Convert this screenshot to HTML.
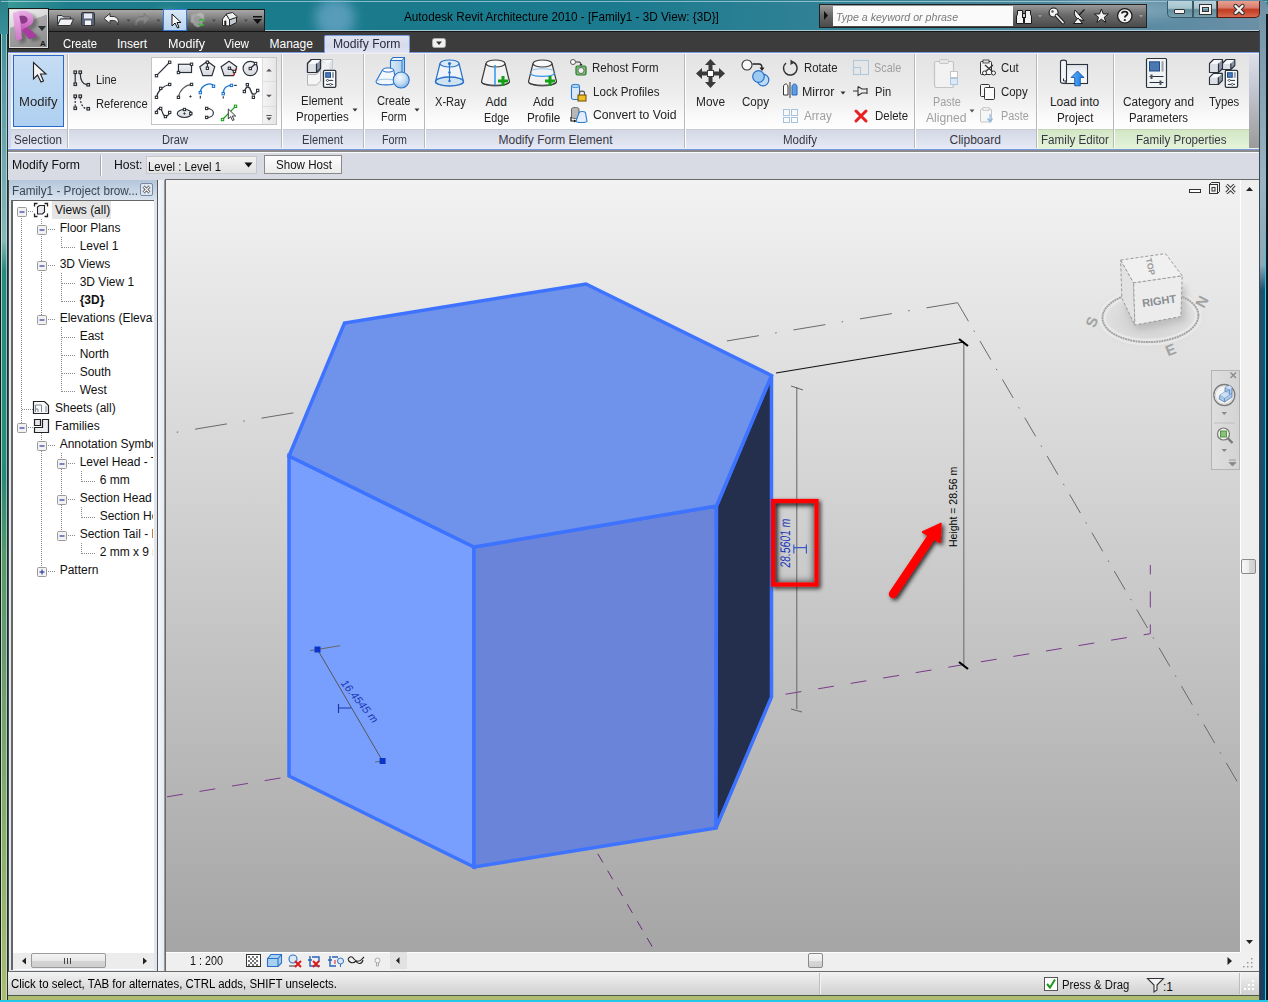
<!DOCTYPE html>
<html><head><meta charset="utf-8">
<style>
*{margin:0;padding:0;box-sizing:border-box}
html,body{width:1268px;height:1002px;overflow:hidden}
body{position:relative;font-family:"Liberation Sans",sans-serif;font-size:12px;color:#1e1e1e;background:#2a8a8a}
.a{position:absolute}
.t{position:absolute;white-space:nowrap;line-height:1}
svg{position:absolute;overflow:visible}
</style></head><body>
<div class="a" style="left:0px;top:0px;width:1268px;height:1002px;background:linear-gradient(180deg,#2a8088 0,#3a9098 34px,#5a9aa8 80px,#7aaab4 180px,#8ab8b8 240px,#2a8a80 270px,#2a8a7a 480px,#5a9a6a 560px,#6a9a72 650px,#8aae6a 820px,#b0bb70 1002px);"></div>
<div class="a" style="left:0px;top:0px;width:1px;height:1002px;background:#0a1a14;"></div>
<div class="a" style="left:1px;top:0px;width:1px;height:1002px;background:rgba(220,240,230,.7);"></div>
<div class="a" style="left:6px;top:30px;width:1px;height:972px;background:rgba(210,235,225,.6);"></div>
<div class="a" style="left:7px;top:30px;width:1px;height:972px;background:#1a3030;"></div>
<div class="a" style="left:8px;top:0px;width:1251px;height:32px;background:linear-gradient(90deg,#3a9a98 0,#1e7e8c 60px,#1a7b8c 260px,#1b7a8e 600px,#3a8498 900px,#5a8aa2 1150px,#6b90a6 1251px);"></div>
<div class="a" style="left:0px;top:0px;width:8px;height:34px;background:linear-gradient(180deg,#2a8088,#3a9098);"></div>
<div class="a" style="left:1px;top:1px;width:1266px;height:1px;background:#cfe6e6;opacity:.6"></div>
<svg style="left:0;top:0" width="1268" height="34"><defs><filter id="tb"><feGaussianBlur stdDeviation="6"/></filter></defs><g filter="url(#tb)" opacity=".55"><circle cx="335" cy="18" r="20" fill="#8ab8e0"/><circle cx="168" cy="22" r="12" fill="#6ac890"/><ellipse cx="1120" cy="10" rx="60" ry="10" fill="#9ab8c8"/></g></svg>
<div class="a" style="left:1259px;top:0px;width:9px;height:1002px;background:linear-gradient(180deg,#6a90a6 0,#7898aa 30px,#9ab4c2 180px,#8aa8b8 265px,#1e5070 290px,#1a4a6a 630px,#1a3f5e 1002px);border-radius:0 8px 0 0"></div>
<div class="a" style="left:8px;top:30px;width:1251px;height:1px;background:rgba(210,228,236,.75);"></div>
<div class="a" style="left:1259px;top:30px;width:1px;height:972px;background:#3a4a55;"></div>
<div class="a" style="left:1265px;top:230px;width:1px;height:772px;background:linear-gradient(180deg,rgba(42,208,240,0),#2ad0f0 60px);"></div>
<div class="a" style="left:1266px;top:14px;width:2px;height:988px;background:#0a1a20;"></div>
<div class="a" style="left:0px;top:1000px;width:1268px;height:2px;background:#22c8e8;"></div>
<div class="t" style="left:404.0px;top:10.7px;font-size:12px;color:#000;transform:scaleX(0.978);transform-origin:0 0;">Autodesk Revit Architecture 2010 - [Family1 - 3D View: {3D}]</div>
<div class="a" style="left:1167px;top:1px;width:26px;height:17px;border:1px solid #3a5a66;border-top:0;border-radius:0 0 0 5px;background:linear-gradient(180deg,#b9d3dc 0,#a6c3cd 45%,#5f8c9c 55%,#7aa2b0)"></div>
<div class="a" style="left:1174px;top:9px;width:11px;height:5px;background:#f4f4f4;border:1px solid #333;border-radius:1px"></div>
<div class="a" style="left:1193px;top:1px;width:24px;height:17px;border:1px solid #3a5a66;border-top:0;background:linear-gradient(180deg,#b9d3dc 0,#a6c3cd 45%,#5f8c9c 55%,#7aa2b0)"></div>
<div class="a" style="left:1200px;top:5px;width:11px;height:9px;border:2.5px solid #f4f4f4;box-shadow:0 0 0 1px #333, inset 0 0 0 1px #333"></div>
<div class="a" style="left:1217px;top:1px;width:43px;height:17px;border:1px solid #5a1a10;border-top:0;border-radius:0 0 5px 0;background:linear-gradient(180deg,#e8a090 0,#d88070 40%,#c03a20 55%,#d86a50)"></div>
<svg style="left:1233px;top:4px" width="12" height="11" viewBox="0 0 12 11"><path d="M2.5,2 L9.5,9 M9.5,2 L2.5,9" stroke="#333" stroke-width="4.4" stroke-linecap="round"/><path d="M2.5,2 L9.5,9 M9.5,2 L2.5,9" stroke="#f4f4f4" stroke-width="2.4" stroke-linecap="round"/></svg>
<div class="a" style="left:819px;top:4px;width:328px;height:24px;background:linear-gradient(180deg,#9a9a9a,#6a6a6a 45%,#4a4a4a);border:1px solid #222"></div>
<div class="a" style="left:833px;top:6px;width:180px;height:20px;background:#fafafa;"></div>
<svg style="left:823px;top:11px" width="6" height="10"><path d="M1,0 L5,4.5 L1,9 Z" fill="#111"/></svg>
<div class="t" style="left:836.0px;top:11.6px;font-size:11.5px;color:#7a7a7a;font-style:italic;transform:scaleX(0.924);transform-origin:0 0;">Type a keyword or phrase</div>
<svg style="left:0;top:0" width="1268" height="34" viewBox="0 0 1268 34">
<g fill="#f2f2f2" stroke="#1a1a1a" stroke-width="1">
<path d="M1017.5,10.5 H1022.5 V14.5 L1023.5,16 V23.5 H1016.5 V16 L1017.5,14.5 Z"/>
<path d="M1025.5,10.5 H1030.5 V14.5 L1031.5,16 V23.5 H1024.5 V16 L1025.5,14.5 Z"/>
<rect x="1022.5" y="13.5" width="3" height="4" fill="#ccc"/>
</g>
<path d="M1038,15 H1042 L1040,17.5 Z M1139,15 H1143 L1141,17.5 Z" fill="#9a9a9a"/>
<circle cx="1053.6" cy="12.5" r="4.5" fill="#f2f2f2" stroke="#1a1a1a" stroke-width="1.1"/>
<circle cx="1052.5" cy="11.5" r="1.2" fill="#555"/>
<path d="M1056.5,15.5 L1063,22.5" stroke="#1a1a1a" stroke-width="3.6" stroke-linecap="round"/><path d="M1056.5,15.5 L1063,22.5" stroke="#f2f2f2" stroke-width="1.8" stroke-linecap="round"/>
<path d="M1075,10 C1073,15 1076,20 1084,20.5 Z" fill="#f2f2f2" stroke="#1a1a1a" stroke-width="1"/>
<path d="M1079,15 L1084.5,9.5" stroke="#1a1a1a" stroke-width="1.2"/>
<path d="M1078,18 L1073.5,23.5 H1082.5 Z" fill="#f2f2f2" stroke="#1a1a1a" stroke-width="1"/>
<path d="M1101.4,9 L1103.3,14 H1108.5 L1104.3,17.2 L1105.9,22.5 L1101.4,19.2 L1096.9,22.5 L1098.5,17.2 L1094.3,14 H1099.5 Z" fill="#f2f2f2" stroke="#1a1a1a" stroke-width="1"/>
<circle cx="1124.8" cy="15.8" r="7.2" fill="#f2f2f2" stroke="#1a1a1a" stroke-width="1.2"/>
<path d="M1122,13.5 C1122,11 1127.5,11 1127.5,13.5 C1127.5,15.5 1124.8,15.5 1124.8,17.5" fill="none" stroke="#1a1a1a" stroke-width="1.8"/>
<circle cx="1124.8" cy="20" r="1.1" fill="#1a1a1a"/>
</svg>
<div class="a" style="left:48px;top:9px;width:217px;height:23px;background:linear-gradient(180deg,#a8a8a8 0,#8a8a8a 30%,#5a5a5a 70%,#3a3a3a 100%);border:1px solid #1a1a1a;border-left:0"></div>
<div class="a" style="left:163px;top:9px;width:24px;height:22px;background:linear-gradient(180deg,#d8e8f8,#b8d4f0);border:1px solid #3a7ad8"></div>
<svg style="left:48px;top:9px" width="217" height="23" viewBox="0 0 217 23">
<path d="M9.5,6.5 H14 L15.5,8 H22.5 V10 H12.5 L9.5,16.5 Z" fill="#d8dce4" stroke="#333" stroke-width="1"/>
<path d="M12.5,10 H25.5 L22.5,16.5 H9.5 Z" fill="#f0f2f6" stroke="#333" stroke-width="1"/>
<rect x="33.5" y="3.5" width="13" height="13" rx="1.5" fill="#5a6478" stroke="#333"/>
<rect x="36" y="4.5" width="8" height="5" fill="#e8ecf2"/>
<rect x="37" y="11.5" width="6" height="4.5" fill="#f4f4f4"/>
<path d="M56,9.5 L62,4.5 V7.5 H65 C70,7.5 71,12 70,16 C69,12 67,11.5 64,11.5 H62 V14.5 Z" fill="#f2f2f2" stroke="#333" stroke-width="1"/>
<path d="M78.5,10.5 H82.5 L80.5,13 Z" fill="#4a4a4a"/>
<path d="M102,9.5 L96,4.5 V7.5 H93 C88,7.5 87,12 88,16 C89,12 91,11.5 94,11.5 H96 V14.5 Z" fill="#8a8a8a" stroke="#7a7a7a" stroke-width="1"/>
<path d="M108.5,10.5 H112.5 L110.5,13 Z" fill="#4a4a4a"/>
<path d="M124,5 V17 L127,14 L129.5,19 L131,18.5 L129,13.5 H133 Z" fill="#f8f8f8" stroke="#111" stroke-width="1"/>
<g fill="#a8a8a8" stroke="#9a9a9a" stroke-width="0.8">
<path d="M143,6 L147,4 L151,6 V13 L147,15 L143,13 Z"/><path d="M148,5 L152,3 L156,5 V12 L152,14 L148,12 Z" fill="#b4b4b4"/>
<path d="M146,9 L150,7 L154,9 V16 L150,18 L146,16 Z" fill="#9a9a9a"/>
</g>
<path d="M151,12 C152,10 155,10 156,12 M156,15 C155,17 152,17 151,15" fill="none" stroke="#3ab03a" stroke-width="1.3"/>
<path d="M155.5,10 L157,12.5 L154.5,12.5 Z M151.5,17 L150,14.5 L152.5,14.5 Z" fill="#3ab03a"/>
<path d="M164,10.5 H168 L166,13 Z M196,10.5 H200 L198,13 Z" fill="#4a4a4a"/>
<path d="M181.5,10.5 L188.5,8 V13.5 L181.5,17 Z" fill="#c4c8d0" stroke="#1a1a1a" stroke-width="0.9" stroke-linejoin="round"/>
<path d="M174.5,10 L178,5.5 L181.5,10 V17 L174.5,16.5 Z" fill="#f4f4f4" stroke="#1a1a1a" stroke-width="0.9" stroke-linejoin="round"/>
<path d="M178,5 L184.5,3.5 L189.5,8 L181.5,10.8 Z" fill="#eeeeee" stroke="#1a1a1a" stroke-width="0.9" stroke-linejoin="round"/>
<path d="M176.3,16.8 V12.5 C176.3,11.3 178.3,11.3 178.3,12.5 V16.8 Z" fill="#222"/>
<rect x="205" y="7" width="9" height="1.5" fill="#111"/>
<path d="M205,10 H214 L209.5,15 Z" fill="#111"/>
</svg>
<div class="a" style="left:8px;top:32px;width:1251px;height:20px;background:#3c3c3c;"></div>
<div class="a" style="left:8px;top:31px;width:1251px;height:1px;background:#161616;"></div>
<div class="a" style="left:324px;top:35px;width:86px;height:18px;background:linear-gradient(180deg,#dfe2ee,#d6dbec 60%,#e2e6f6);border:1px solid #7a9ae0;border-bottom:0;border-radius:2px 2px 0 0"></div>
<div class="t" style="left:63.0px;top:37.7px;font-size:12px;color:#fff;transform:scaleX(0.944);transform-origin:0 0;">Create</div>
<div class="t" style="left:117.0px;top:37.7px;font-size:12px;color:#fff;">Insert</div>
<div class="t" style="left:167.5px;top:37.7px;font-size:12px;color:#fff;transform:scaleX(1.047);transform-origin:0 0;">Modify</div>
<div class="t" style="left:224.0px;top:37.7px;font-size:12px;color:#fff;transform:scaleX(0.969);transform-origin:0 0;">View</div>
<div class="t" style="left:269.5px;top:37.7px;font-size:12px;color:#fff;">Manage</div>
<div class="t" style="left:333.0px;top:37.7px;font-size:12px;color:#2a2a3a;transform:scaleX(1.012);transform-origin:0 0;">Modify Form</div>
<svg style="left:432px;top:38px" width="15" height="11" viewBox="0 0 15 11"><rect x="0.5" y="0.5" width="13" height="9" rx="2" fill="#f0f0f0" stroke="#aaa"/><path d="M4,3.5 H10 L7,7 Z" fill="#333"/></svg>
<div class="a" style="left:8px;top:8px;width:41px;height:41px;background:#1a1a1a"></div>
<div class="a" style="left:9px;top:9px;width:39px;height:39px;background:linear-gradient(160deg,#f0f0f0 0,#d8d8d8 35%,#a8a8a8 36%,#8a8a8a 100%);border:1px solid #dcdcdc"></div>
<svg style="left:9px;top:9px" width="39" height="39" viewBox="0 0 39 39">
<defs><linearGradient id="rg" x1="0" y1="0" x2="0" y2="1"><stop offset="0" stop-color="#e8b0e4"/><stop offset=".45" stop-color="#d070c8"/><stop offset="1" stop-color="#9a2890"/></linearGradient><filter id="rsh"><feGaussianBlur stdDeviation="1.5"/></filter></defs>
<path d="M8,5 L12,3 C24,1 28,8 26,14 C25,17 22,18 20,19 L30,28 L22,31 L15,22 L15,31 L9,33 Z" fill="#333" opacity=".45" filter="url(#rsh)" transform="translate(2,2)"/>
<path d="M4,4 L10,2 C22,0 26,7 24,13 C23,16 20,17 18,18 L28,27 L20,30 L13,21 L13,30 L7,32 Z" fill="url(#rg)"/>
<path d="M10,7 C16,6 19,8 18.5,11.5 C18,14 15,15 12,14.5 Z" fill="#8a3a88"/>
<path d="M4,4 L10,2 L13,30 L7,32 Z" fill="#f0c0ec" opacity=".55"/>
<path d="M13,21 L18,18 L28,27 L20,30 Z" fill="#a83aa0"/>
<path d="M29,17 H37 L33,22 Z" fill="#2a3038"/>
<text x="31" y="37" font-family="Liberation Sans" font-size="8" font-weight="bold" fill="#1a1a1a">A</text>
</svg>
<div class="a" style="left:8px;top:52px;width:1251px;height:98px;background:#f0f0f0;"></div>
<div class="a" style="left:8px;top:52px;width:1251px;height:1px;background:#7a98e0;"></div>
<div class="a" style="left:325px;top:52px;width:84px;height:1px;background:#e2e6f4;"></div>
<div class="a" style="left:8px;top:54px;width:1241px;height:75px;background:linear-gradient(180deg,#e3e3e3 0,#ededed 40px,#fafafa 64px,#fff 75px);"></div>
<div class="a" style="left:1249px;top:54px;width:10px;height:94px;background:linear-gradient(180deg,#dde0ea,#c8ccd8 30%,#9a9a9a 100%);"></div>
<div class="a" style="left:8px;top:129px;width:1241px;height:20px;background:linear-gradient(180deg,#d4d8e4,#e6eaf6);border-top:1px solid #c8ccd8"></div>
<div class="a" style="left:1036px;top:129px;width:213px;height:20px;background:linear-gradient(180deg,#d2e6c4,#e4f4da);border-top:1px solid #c4d4b8"></div>
<div class="a" style="left:8px;top:149px;width:1251px;height:1px;background:#7a9ae0;"></div>
<div class="a" style="left:8px;top:150px;width:1251px;height:2px;background:#8a8a8a;"></div>
<div class="a" style="left:8px;top:152px;width:1251px;height:1px;background:#fafafa;"></div>
<div class="a" style="left:8px;top:54px;width:3px;height:94px;background:#c8d4f0;"></div>
<div class="a" style="left:67px;top:54px;width:1px;height:94px;background:#b8b8b8;box-shadow:1px 0 0 #fff"></div>
<div class="a" style="left:281px;top:54px;width:1px;height:94px;background:#b8b8b8;box-shadow:1px 0 0 #fff"></div>
<div class="a" style="left:363px;top:54px;width:1px;height:94px;background:#b8b8b8;box-shadow:1px 0 0 #fff"></div>
<div class="a" style="left:424px;top:54px;width:1px;height:94px;background:#b8b8b8;box-shadow:1px 0 0 #fff"></div>
<div class="a" style="left:684px;top:54px;width:1px;height:94px;background:#b8b8b8;box-shadow:1px 0 0 #fff"></div>
<div class="a" style="left:914px;top:54px;width:1px;height:94px;background:#b8b8b8;box-shadow:1px 0 0 #fff"></div>
<div class="a" style="left:1036px;top:54px;width:1px;height:94px;background:#b8b8b8;box-shadow:1px 0 0 #fff"></div>
<div class="a" style="left:1113px;top:54px;width:1px;height:94px;background:#b8b8b8;box-shadow:1px 0 0 #fff"></div>
<div class="t" style="left:14.0px;top:133.7px;font-size:12px;color:#383844;transform:scaleX(0.972);transform-origin:0 0;">Selection</div>
<div class="t" style="left:162.0px;top:133.7px;font-size:12px;color:#383844;transform:scaleX(0.928);transform-origin:0 0;">Draw</div>
<div class="t" style="left:301.5px;top:133.7px;font-size:12px;color:#383844;transform:scaleX(0.931);transform-origin:0 0;">Element</div>
<div class="t" style="left:381.5px;top:133.7px;font-size:12px;color:#383844;transform:scaleX(0.893);transform-origin:0 0;">Form</div>
<div class="t" style="left:498.5px;top:133.7px;font-size:12px;color:#383844;">Modify Form Element</div>
<div class="t" style="left:783.0px;top:133.7px;font-size:12px;color:#383844;transform:scaleX(0.962);transform-origin:0 0;">Modify</div>
<div class="t" style="left:949.5px;top:133.7px;font-size:12px;color:#383844;">Clipboard</div>
<div class="t" style="left:1040.6px;top:133.7px;font-size:12px;color:#383844;transform:scaleX(0.971);transform-origin:0 0;">Family Editor</div>
<div class="t" style="left:1136.1px;top:133.7px;font-size:12px;color:#383844;transform:scaleX(0.970);transform-origin:0 0;">Family Properties</div>
<div class="a" style="left:13px;top:55px;width:51px;height:72px;background:linear-gradient(180deg,#c6dcf4,#aed0f0);border:1px solid #2a68cc"></div>
<svg style="left:30px;top:60px" width="20" height="24" viewBox="0 0 20 24"><path d="M3.5,2.5 V19 L7.5,15 L11,22 L13.5,21 L10.5,14 H16 Z" fill="#f4f4f4" stroke="#222" stroke-width="1.1"/></svg>
<div class="t" style="left:19.0px;top:95.9px;font-size:12px;color:#242424;transform:scaleX(1.089);transform-origin:0 0;">Modify</div>
<svg style="left:73px;top:70px" width="18" height="42" viewBox="0 0 18 42">
<g fill="none" stroke="#2a3038" stroke-width="1.2">
<rect x="1" y="1" width="2.5" height="2.5"/><rect x="1" y="13" width="2.5" height="2.5"/><path d="M2.2,3.5 V13"/>
<rect x="6" y="1" width="2.5" height="2.5"/><rect x="14" y="13.5" width="2.5" height="2.5"/><path d="M7.2,3.5 C7.5,10 10,14.5 14,14.8"/>
<rect x="1" y="25" width="2.5" height="2.5"/><rect x="1" y="37" width="2.5" height="2.5"/><path d="M2.2,27.5 V37" stroke-dasharray="2 1.5"/>
<rect x="6" y="25" width="2.5" height="2.5"/><rect x="14" y="37.5" width="2.5" height="2.5"/><path d="M7.2,27.5 C7.5,34 10,38.5 14,38.8" stroke-dasharray="2 1.5"/>
</g></svg>
<div class="t" style="left:95.5px;top:74.1px;font-size:12px;color:#242424;transform:scaleX(0.912);transform-origin:0 0;">Line</div>
<div class="t" style="left:95.5px;top:98.1px;font-size:12px;color:#242424;transform:scaleX(0.934);transform-origin:0 0;">Reference</div>
<div class="a" style="left:151px;top:57px;width:126px;height:68px;background:#fff;border:1px solid #c4c4c4"></div>
<div class="a" style="left:262px;top:58px;width:14px;height:24px;background:linear-gradient(90deg,#f4f4f4,#e6e6e6);border-left:1px solid #ddd;border-bottom:1px solid #ddd"></div>
<div class="a" style="left:262px;top:82px;width:14px;height:25px;background:linear-gradient(90deg,#f4f4f4,#e6e6e6);border-left:1px solid #ddd;border-bottom:1px solid #ddd"></div>
<div class="a" style="left:262px;top:107px;width:14px;height:17px;background:linear-gradient(90deg,#f4f4f4,#e6e6e6);border-left:1px solid #ddd"></div>
<svg style="left:148px;top:54px" width="134" height="74" viewBox="0 0 1268 700">
<defs><linearGradient id="gg" x1="0" y1="0" x2="0" y2="1"><stop offset="0" stop-color="#f4f4f6"/><stop offset="1" stop-color="#d8dae0"/></linearGradient></defs>
<g fill="none" stroke="#2a3038" stroke-width="11">
<path d="M80,205 L205,78"/>
<rect x="288" y="97" width="124" height="78" fill="url(#gg)"/>
<path d="M562,68 L632,120 L605,205 L518,205 L490,120 Z" fill="url(#gg)"/><path d="M562,78 V135"/>
<path d="M767,68 L840,120 L810,205 L720,205 L692,120 Z" fill="url(#gg)"/><path d="M770,135 L818,165"/>
<circle cx="968" cy="137" r="68" fill="url(#gg)"/><path d="M968,137 L1018,90"/>
<path d="M80,410 C90,350 140,300 205,288"/>
<path d="M288,410 C300,340 350,295 412,288" stroke="#555"/>
<path d="M495,420 V395 M712,420 V400" />
<path d="M815,297 H840"/>
<path d="M912,355 L940,290 L997,410 L1038,345" stroke="#8a8a8a" stroke-width="7"/>
<path d="M912,355 C930,300 960,300 975,350 C990,400 1020,380 1038,345"/>
<path d="M80,553 C95,500 120,500 140,560 C155,600 185,600 205,553"/>
<ellipse cx="345" cy="563" rx="68" ry="38" fill="url(#gg)"/>
<path d="M555,515 C640,515 640,600 555,600"/>
</g>
<g fill="none" stroke="#1a72d0" stroke-width="12">
<path d="M495,365 C500,290 600,260 620,305"/>
<path d="M712,375 C712,320 750,297 790,297"/>
</g>
<path d="M808,205 L840,135" stroke="#ee1111" stroke-width="11"/>
<path d="M705,620 L828,495" stroke="#1aa01a" stroke-width="12"/>
<g fill="#fff" stroke="#2a3038" stroke-width="10">
<rect x="69" y="194" width="22" height="22"/><rect x="194" y="67" width="22" height="22"/>
<rect x="277" y="164" width="22" height="22"/><rect x="401" y="86" width="22" height="22"/>
<rect x="551" y="67" width="22" height="22"/><rect x="551" y="124" width="22" height="22"/>
<rect x="759" y="124" width="22" height="22"/><rect x="807" y="154" width="22" height="22"/>
<rect x="957" y="126" width="22" height="22"/><rect x="1007" y="79" width="22" height="22"/>
<rect x="69" y="399" width="22" height="22"/><rect x="109" y="314" width="22" height="22"/><rect x="194" y="277" width="22" height="22"/>
<rect x="277" y="399" width="22" height="22"/><rect x="401" y="277" width="22" height="22"/>
<rect x="901" y="344" width="22" height="22"/><rect x="929" y="279" width="22" height="22"/><rect x="986" y="399" width="22" height="22"/><rect x="1027" y="334" width="22" height="22"/>
<rect x="69" y="542" width="22" height="22"/><rect x="109" y="504" width="22" height="22"/><rect x="154" y="581" width="22" height="22"/><rect x="194" y="542" width="22" height="22"/>
<rect x="334" y="514" width="22" height="22"/><rect x="394" y="552" width="22" height="22"/>
<rect x="544" y="504" width="22" height="22"/><rect x="544" y="589" width="22" height="22"/>
</g>
<g fill="#fff" stroke="#1a72d0" stroke-width="10">
<rect x="484" y="354" width="22" height="22"/><rect x="609" y="294" width="22" height="22"/>
<rect x="701" y="364" width="22" height="22"/><rect x="779" y="286" width="22" height="22"/>
</g>
<g fill="#fff" stroke="#1aa01a" stroke-width="10"><rect x="694" y="609" width="22" height="22"/><rect x="817" y="484" width="22" height="22"/></g>
<path d="M402,390 V414 M390,402 H414 M345,551 V575 M333,563 H357" stroke="#222" stroke-width="7"/>
<path d="M760,520 V615 L782,592 L800,630 L815,623 L798,587 H830 Z" fill="#f4f4f4" stroke="#222" stroke-width="8"/>
<path d="M1118,165 H1172 L1145,140 Z M1118,385 H1172 L1145,410 Z M1120,578 H1170 V586 H1120 Z M1120,600 H1170 L1145,630 Z" fill="#555"/>
</svg>
<svg style="left:300px;top:55px" width="45" height="37" viewBox="300 55 45 37">
<path d="M322.5,59.5 H332.5 V69 M322.5,59.5 L319,63" fill="#f6f7f9" stroke="#b4b4b4" stroke-width="1"/>
<rect x="322" y="63" width="7" height="9" fill="#eef0f3"/><path d="M329.5,63 L332.5,60 V69 L329.5,72 Z" fill="#dde0e6"/>
<path d="M307.5,74.5 H316.5 L320.5,70.5 V81 L316.5,85 H307.5 Z" fill="#f4f5f7" stroke="#b4b4b4" stroke-width="1"/>
<path d="M307.5,63.5 L311.5,59.5 H320.5 V68.5 L316.5,72.5 H307.5 Z" fill="#f8f8fa" stroke="#2a323c" stroke-width="1.2" stroke-linejoin="round"/>
<rect x="308.5" y="64" width="8" height="8" fill="#dcdfe4"/>
<path d="M316.5,64 L320,60.5 V68.3 L316.5,72 Z" fill="#8a96a8"/>
<path d="M307.5,63.5 L311.5,59.5 H320.5 L316.5,63.5 Z" fill="#fbfbfc" stroke="none"/>
<path d="M307.5,63.5 L311.5,59.5 H320.5 V68.5 L316.5,72.5 H307.5 Z M316.5,63.5 V72.5" fill="none" stroke="#2a323c" stroke-width="1.2" stroke-linejoin="round"/>
<rect x="323.5" y="70.3" width="12.3" height="17" rx="1.2" fill="#fafbfc" stroke="#2a323c" stroke-width="1.3"/>
<rect x="325.2" y="72.2" width="5.8" height="5.6" fill="#1e4a8a"/><rect x="326.2" y="73.2" width="3.8" height="3.6" fill="#4a7ab8"/>
<rect x="332" y="72.2" width="2" height="5.6" fill="#9aa0aa"/>
<path d="M326,80.4 H333.2 M326,84.4 H333.2" stroke="#2a323c" stroke-width="1"/>
<path d="M327.5,79 L328.7,80.4 L327.5,81.8 L326.3,80.4 Z M330.5,83 L331.7,84.4 L330.5,85.8 L329.3,84.4 Z" fill="#fff" stroke="#2a323c" stroke-width="0.7"/>
</svg>
<svg style="left:352px;top:108px" width="6" height="4"><path d="M0.5,0.5 H5.5 L3,3.5 Z" fill="#333"/></svg>
<div class="t" style="left:301.3px;top:95.0px;font-size:12px;color:#242424;transform:scaleX(0.954);transform-origin:0 0;">Element</div>
<div class="t" style="left:296.2px;top:110.6px;font-size:12px;color:#242424;transform:scaleX(0.965);transform-origin:0 0;">Properties</div>
<svg style="left:370px;top:54px" width="45" height="40" viewBox="370 54 45 40">
<defs><radialGradient id="sph" cx=".4" cy=".35" r=".65"><stop offset="0" stop-color="#f4faff"/><stop offset=".6" stop-color="#c4def4"/><stop offset="1" stop-color="#8ab8e4"/></radialGradient>
<linearGradient id="bxg" x1="0" y1="0" x2="1" y2="0"><stop offset="0" stop-color="#d8eaf8"/><stop offset="1" stop-color="#a8cceb"/></linearGradient></defs>
<path d="M390.5,60.5 L393,57.5 H404.5 V75 L402,78 H390.5 Z" fill="url(#bxg)" stroke="#2a72c8" stroke-width="1.1" stroke-linejoin="round"/>
<path d="M390.5,60.5 L393,57.5 H404.5 L402,60.5 Z M402,60.5 V78" fill="#eef6fc" stroke="#2a72c8" stroke-width="1"/>
<path d="M382.5,70 L376,81.5 C376,86 396,86 396,81.5 L393.7,70 Z" fill="#f2f8fd" stroke="#2a72c8" stroke-width="1.1"/>
<ellipse cx="388.1" cy="70" rx="5.6" ry="2.1" fill="#fafcff" stroke="#2a72c8" stroke-width="1"/>
<path d="M376,81.5 C376,78.5 396,78.5 396,81.5" fill="none" stroke="#8ab8e4" stroke-width="0.8"/>
<circle cx="401.2" cy="80" r="8" fill="url(#sph)" stroke="#2a72c8" stroke-width="1.1"/>
</svg>
<svg style="left:414px;top:108px" width="6" height="4"><path d="M0.5,0.5 H5.5 L3,3.5 Z" fill="#333"/></svg>
<div class="t" style="left:377.4px;top:95.0px;font-size:12px;color:#242424;transform:scaleX(0.930);transform-origin:0 0;">Create</div>
<div class="t" style="left:381.4px;top:110.6px;font-size:12px;color:#242424;transform:scaleX(0.911);transform-origin:0 0;">Form</div>
<svg style="left:434px;top:59px" width="32" height="30" viewBox="0 0 32 30">
<path d="M6,4.5 L1.5,22.5 C1.5,27.5 29.5,27.5 29.5,22.5 L25,4.5" fill="#eef4fa" stroke="#2a72c8" stroke-width="1.2"/>
<ellipse cx="15.5" cy="4.5" rx="9.5" ry="3.5" fill="#dceaf6" stroke="#2a72c8" stroke-width="1.2"/>
<ellipse cx="15.5" cy="22.5" rx="14" ry="4.5" fill="#cfe2f2" stroke="#2a72c8" stroke-width="1.4" stroke-dasharray="0"/>
<path d="M15.5,4.5 V22.5" stroke="#2a72c8" stroke-width="1.2"/><circle cx="15.5" cy="4.5" r="1.6" fill="#2a72c8"/><circle cx="15.5" cy="13.5" r="1.2" fill="#2a72c8"/><circle cx="15.5" cy="22" r="1.2" fill="#2a72c8"/></svg>
<svg style="left:480px;top:59px" width="32" height="30" viewBox="0 0 32 30">
<path d="M6,4.5 L1.5,22.5 C1.5,27.5 29.5,27.5 29.5,22.5 L25,4.5" fill="#f2f2f4" stroke="#3a3a3a" stroke-width="1.2"/>
<ellipse cx="15.5" cy="4.5" rx="9.5" ry="3.5" fill="#fafafa" stroke="#3a3a3a" stroke-width="1.2"/>
<ellipse cx="15.5" cy="22.5" rx="14" ry="4.5" fill="none" stroke="#3a3a3a" stroke-width="0.8" stroke-dasharray="30 100"/>
<path d="M15,6 V26" stroke="#3a9af0" stroke-width="1.6"/><path d="M23,17 V27 M18,22 H28" stroke="#14a014" stroke-width="3"/></svg>
<svg style="left:527px;top:59px" width="32" height="30" viewBox="0 0 32 30">
<path d="M6,4.5 L1.5,22.5 C1.5,27.5 29.5,27.5 29.5,22.5 L25,4.5" fill="#f2f2f4" stroke="#3a3a3a" stroke-width="1.2"/>
<ellipse cx="15.5" cy="4.5" rx="9.5" ry="3.5" fill="#fafafa" stroke="#3a3a3a" stroke-width="1.2"/>
<ellipse cx="15.5" cy="22.5" rx="14" ry="4.5" fill="none" stroke="#3a3a3a" stroke-width="0.8" stroke-dasharray="30 100"/>
<path d="M3.5,14 C4,18.5 27,18.5 27.5,14" fill="none" stroke="#3a9af0" stroke-width="1.4"/><path d="M4.5,12 C5,9 26,9 26.5,12" fill="none" stroke="#8ac0f0" stroke-width="1"/><path d="M23,17 V27 M18,22 H28" stroke="#14a014" stroke-width="3"/></svg>
<div class="t" style="left:435.0px;top:95.9px;font-size:12px;color:#242424;transform:scaleX(0.924);transform-origin:0 0;">X-Ray</div>
<div class="t" style="left:485.5px;top:95.9px;font-size:12px;color:#242424;">Add</div>
<div class="t" style="left:483.7px;top:111.9px;font-size:12px;color:#242424;transform:scaleX(0.903);transform-origin:0 0;">Edge</div>
<div class="t" style="left:532.9px;top:95.9px;font-size:12px;color:#242424;transform:scaleX(0.983);transform-origin:0 0;">Add</div>
<div class="t" style="left:526.7px;top:111.9px;font-size:12px;color:#242424;transform:scaleX(0.979);transform-origin:0 0;">Profile</div>
<svg style="left:570px;top:59px" width="18" height="64" viewBox="0 0 18 64">
<circle cx="3" cy="3" r="2.5" fill="#fff" stroke="#555" stroke-width="1"/><path d="M6,3 H10 L11,5" fill="none" stroke="#333" stroke-width="1"/><path d="M9.5,5 L12.5,5 L11,7.5 Z" fill="#333"/>
<rect x="6" y="7" width="10" height="9" rx="1.5" fill="#7ac07a" stroke="#2a7a2a" stroke-width="1.2"/><circle cx="11" cy="11.5" r="3" fill="#eee" stroke="#555" stroke-width="0.8"/>
<path d="M1.5,27 C1.5,25 9.5,25 9.5,27 V39 C9.5,41 1.5,41 1.5,39 Z" fill="#dbe9f6" stroke="#2a7ad0" stroke-width="1.1"/><ellipse cx="5.5" cy="27" rx="4" ry="1.6" fill="#b8d8f0" stroke="#2a7ad0" stroke-width="0.8"/>
<rect x="8" y="36" width="8" height="6" fill="#f0c020" stroke="#6a4a00" stroke-width="1"/><path d="M9.5,36 V34 C9.5,31.5 14.5,31.5 14.5,34 V36" fill="none" stroke="#555" stroke-width="1.1"/>
<path d="M1.5,50 C1.5,48 9,48 9,50 V58 C9,60 1.5,60 1.5,58 Z" fill="#b8b8b8" stroke="#666" stroke-width="1"/>
<path d="M9,54 C9,52 15.5,52 15.5,54 L17,62 C17,64 6,64 6,62 Z" fill="#e2eefa" stroke="#2a7ad0" stroke-width="1.1"/>
<path d="M1,58 V62 H5" fill="none" stroke="#111" stroke-width="1.2"/><path d="M4,60.5 L6.5,62 L4,63.5 Z" fill="#111"/>
</svg>
<div class="t" style="left:592.4px;top:62.1px;font-size:12px;color:#242424;transform:scaleX(0.959);transform-origin:0 0;">Rehost Form</div>
<div class="t" style="left:593.0px;top:86.1px;font-size:12px;color:#242424;transform:scaleX(0.967);transform-origin:0 0;">Lock Profiles</div>
<div class="t" style="left:593.0px;top:109.2px;font-size:12px;color:#242424;transform:scaleX(1.018);transform-origin:0 0;">Convert to Void</div>
<svg style="left:695px;top:58px" width="31" height="31" viewBox="0 0 31 31">
<path d="M15.5,1 L21,7 H17.5 V13.5 H24 V10 L30,15.5 L24,21 V17.5 H17.5 V24 H21 L15.5,30 L10,24 H13.5 V17.5 H7 V21 L1,15.5 L7,10 V13.5 H13.5 V7 H10 Z" fill="#3a3a3a"/>
<rect x="12.5" y="12.5" width="6" height="6" fill="#fff" stroke="#3a3a3a" stroke-width="1"/>
</svg>
<svg style="left:741px;top:59px" width="30" height="30" viewBox="0 0 30 30">
<circle cx="6" cy="6" r="5" fill="#f8f8f8" stroke="#333" stroke-width="1.1"/>
<path d="M11.5,5 H18 C20,5 21,6 21,9" fill="none" stroke="#222" stroke-width="1.3"/><path d="M18.5,8.5 H23.5 L21,12 Z" fill="#222"/>
<circle cx="22" cy="21" r="5.8" fill="#bcdcf4" stroke="#2a72c8" stroke-width="1.2"/>
<circle cx="17.5" cy="17.5" r="5.8" fill="#9ccaf0" stroke="#2a72c8" stroke-width="1.2"/>
</svg>
<div class="t" style="left:695.5px;top:96.2px;font-size:12px;color:#242424;transform:scaleX(0.988);transform-origin:0 0;">Move</div>
<div class="t" style="left:742.3px;top:96.2px;font-size:12px;color:#242424;transform:scaleX(0.964);transform-origin:0 0;">Copy</div>
<svg style="left:782px;top:59px" width="88" height="64" viewBox="0 0 88 64">
<path d="M4,4 A6.8,6.8 0 1,0 11,3" fill="none" stroke="#333" stroke-width="1.5"/><path d="M8.5,0.5 L12.5,3.5 L8.5,6 Z" fill="#333"/>
<path d="M1.5,28 C1.5,24 6,24 6,28 V36 H1.5 Z" fill="#fff" stroke="#333" stroke-width="1"/><path d="M8,23 V39" stroke="#333" stroke-width="1"/><path d="M10,28 C10,24 15,24 15,28 V36 H10 Z" fill="#5aa0e0" stroke="#2a62b8" stroke-width="1"/>
<g fill="none" stroke="#a8c4dc" stroke-width="1"><rect x="1.5" y="50.5" width="6" height="6"/><rect x="9.5" y="50.5" width="6" height="6"/><rect x="1.5" y="58.5" width="6" height="5"/><rect x="9.5" y="58.5" width="6" height="5"/></g>
<g fill="none" stroke="#b0c8dc" stroke-width="1.1"><rect x="71.5" y="1.5" width="15" height="14"/><rect x="71.5" y="8.5" width="7" height="7"/></g>
<path d="M71,32 H76 M76,27.5 V36.5 L80,34 H85 V30 H80 L76,27.5 M85,29 V35" fill="none" stroke="#333" stroke-width="1.1"/>
<path d="M74,52 L84,62 M84,52 L74,62" stroke="#e82020" stroke-width="3" stroke-linecap="round"/>
</svg>
<svg style="left:840px;top:91px" width="6" height="4"><path d="M0.5,0.5 H5.5 L3,3.5 Z" fill="#333"/></svg>
<div class="t" style="left:804.3px;top:62.0px;font-size:12px;color:#242424;transform:scaleX(0.950);transform-origin:0 0;">Rotate</div>
<div class="t" style="left:801.5px;top:85.9px;font-size:12px;color:#242424;transform:scaleX(1.034);transform-origin:0 0;">Mirror</div>
<div class="t" style="left:803.8px;top:110.0px;font-size:12px;color:#a0a0a0;transform:scaleX(0.966);transform-origin:0 0;">Array</div>
<div class="t" style="left:874.0px;top:62.0px;font-size:12px;color:#a0a0a0;transform:scaleX(0.909);transform-origin:0 0;">Scale</div>
<div class="t" style="left:875.3px;top:85.9px;font-size:12px;color:#242424;transform:scaleX(0.928);transform-origin:0 0;">Pin</div>
<div class="t" style="left:874.8px;top:110.0px;font-size:12px;color:#242424;transform:scaleX(0.954);transform-origin:0 0;">Delete</div>
<svg style="left:933px;top:58px" width="28" height="31" viewBox="0 0 28 31">
<rect x="1.5" y="3.5" width="19" height="26" rx="2" fill="#f2f2f2" stroke="#c4c4c4" stroke-width="1.2"/>
<rect x="6.5" y="1.5" width="9" height="4" rx="1" fill="#e6e6e6" stroke="#c4c4c4"/>
<rect x="17.5" y="13.5" width="7" height="6" fill="#fff" stroke="#c4c4c4"/><rect x="17.5" y="20.5" width="7" height="6" fill="#dceaf6" stroke="#a8c8e8"/>
</svg>
<svg style="left:979px;top:59px" width="18" height="64" viewBox="0 0 18 64">
<rect x="1.5" y="2.5" width="11" height="13" rx="1" fill="#f4f4f4" stroke="#333" stroke-width="1"/><rect x="4" y="1" width="6" height="3" fill="#ddd" stroke="#333" stroke-width="0.8"/>
<path d="M6,6 L14,13 M14,6 L6,13" stroke="#333" stroke-width="1.2"/><circle cx="5.5" cy="14" r="2" fill="#fff" stroke="#333"/><circle cx="14.5" cy="14" r="2" fill="#fff" stroke="#333"/>
<rect x="1.5" y="25.5" width="9" height="12" rx="1" fill="#f4f4f4" stroke="#333" stroke-width="1"/><rect x="5.5" y="28.5" width="10" height="12" rx="1" fill="#fafafa" stroke="#333" stroke-width="1"/>
<rect x="1.5" y="50" width="11" height="13" rx="1" fill="#f6f6f6" stroke="#c4c4c4" stroke-width="1"/><rect x="4" y="48.5" width="6" height="3" fill="#eee" stroke="#c4c4c4" stroke-width="0.8"/><path d="M11,55 V62 M8.5,59.5 L11,62.5 L13.5,59.5" fill="none" stroke="#8ab8e0" stroke-width="1.2"/>
</svg>
<svg style="left:969px;top:109px" width="6" height="4"><path d="M0.5,0.5 H5.5 L3,3.5 Z" fill="#555"/></svg>
<div class="t" style="left:932.8px;top:95.5px;font-size:12px;color:#a0a0a0;transform:scaleX(0.903);transform-origin:0 0;">Paste</div>
<div class="t" style="left:926.0px;top:111.7px;font-size:12px;color:#a0a0a0;transform:scaleX(1.014);transform-origin:0 0;">Aligned</div>
<div class="t" style="left:1001.3px;top:62.1px;font-size:12px;color:#242424;transform:scaleX(0.942);transform-origin:0 0;">Cut</div>
<div class="t" style="left:1001.3px;top:86.4px;font-size:12px;color:#242424;transform:scaleX(0.953);transform-origin:0 0;">Copy</div>
<div class="t" style="left:1001.3px;top:110.0px;font-size:12px;color:#a0a0a0;transform:scaleX(0.903);transform-origin:0 0;">Paste</div>
<svg style="left:1050px;top:52px" width="130" height="40" viewBox="1050 52 130 40">
<defs><linearGradient id="pg" x1="0" y1="0" x2="0" y2="1"><stop offset="0" stop-color="#dfe2e8"/><stop offset=".5" stop-color="#f6f7f9"/><stop offset="1" stop-color="#fafafa"/></linearGradient>
<linearGradient id="ag" x1="0" y1="0" x2="1" y2="0"><stop offset="0" stop-color="#5ab0ff"/><stop offset="1" stop-color="#1a78e0"/></linearGradient></defs>
<rect x="1064.5" y="64.5" width="23" height="19" fill="url(#pg)" stroke="#2a323c" stroke-width="1.1"/>
<path d="M1060.5,62 C1060.5,59.5 1066.5,59.5 1066.5,62 V81.5 C1066.5,84 1060.5,84 1060.5,81.5 Z" fill="#f4f5f7" stroke="#2a323c" stroke-width="1.1"/>
<path d="M1063.5,78.5 V81 H1066" fill="none" stroke="#2a323c" stroke-width="1"/>
<path d="M1077.5,71 L1084,77.5 H1080.3 V85.8 H1074.7 V77.5 H1071 Z" fill="url(#ag)" stroke="#0a4aa0" stroke-width="0.8"/>
<rect x="1146.5" y="58.5" width="20" height="29" rx="1" fill="#f2f3f5" stroke="#2a323c" stroke-width="1.2"/>
<rect x="1149" y="61.3" width="11" height="10.2" fill="#1e4a8a"/><rect x="1150" y="62.3" width="9" height="8.2" fill="#4a78b0"/>
<rect x="1161.5" y="61.3" width="2" height="10.2" fill="#9aa0aa"/>
<path d="M1149.5,76.5 H1163.5 M1149.5,82.5 H1163.5" stroke="#2a323c" stroke-width="1"/>
<rect x="1150.5" y="74.5" width="2" height="4.5" fill="#4a5260"/><rect x="1159.5" y="80.5" width="2" height="4.5" fill="#4a5260"/>
</svg>
<div class="t" style="left:1049.9px;top:96.1px;font-size:12px;color:#242424;">Load into</div>
<div class="t" style="left:1056.7px;top:111.9px;font-size:12px;color:#242424;transform:scaleX(0.975);transform-origin:0 0;">Project</div>
<div class="t" style="left:1122.7px;top:96.1px;font-size:12px;color:#242424;transform:scaleX(0.985);transform-origin:0 0;">Category and</div>
<div class="t" style="left:1128.8px;top:111.9px;font-size:12px;color:#242424;transform:scaleX(0.951);transform-origin:0 0;">Parameters</div>
<svg style="left:1204px;top:55px" width="42" height="37" viewBox="1204 55 42 37"><path d="M1222.3,63.5 L1226.3,59.5 H1234.8 V65.5 L1230.8,69.5 H1222.3 Z" fill="#f8f8fa"/><rect x="1223.3" y="64.0" width="7.0" height="5" fill="#dcdfe4"/><path d="M1230.8,63.5 L1234.3,60.0 V65.5 L1230.8,69.0 Z" fill="#8a96a8"/><path d="M1222.3,63.5 L1226.3,59.5 H1234.8 V65.5 L1230.8,69.5 H1222.3 Z M1230.8,63.5 V69.5" fill="none" stroke="#2a323c" stroke-width="1.2" stroke-linejoin="round"/><path d="M1209.5,77.3 L1213.5,73.3 H1222.3 V80.5 L1218.3,84.5 H1209.5 Z" fill="#f8f8fa"/><rect x="1210.5" y="77.8" width="7.300000000000001" height="6.199999999999999" fill="#dcdfe4"/><path d="M1218.3,77.3 L1221.8,73.8 V80.5 L1218.3,84.0 Z" fill="#8a96a8"/><path d="M1209.5,77.3 L1213.5,73.3 H1222.3 V80.5 L1218.3,84.5 H1209.5 Z M1218.3,77.3 V84.5" fill="none" stroke="#2a323c" stroke-width="1.2" stroke-linejoin="round"/><path d="M1209.5,63.5 L1213.5,59.5 H1222.5 V68.5 L1218.5,72.5 H1209.5 Z" fill="#f8f8fa"/><rect x="1210.5" y="64.0" width="7.5" height="8" fill="#dcdfe4"/><path d="M1218.5,63.5 L1222.0,60.0 V68.5 L1218.5,72.0 Z" fill="#8a96a8"/><path d="M1209.5,63.5 L1213.5,59.5 H1222.5 V68.5 L1218.5,72.5 H1209.5 Z M1218.5,63.5 V72.5" fill="none" stroke="#2a323c" stroke-width="1.2" stroke-linejoin="round"/><rect x="1225.3" y="70.3" width="12.3" height="17" rx="1.2" fill="#fafbfc" stroke="#2a323c" stroke-width="1.3"/>
<rect x="1227" y="72.2" width="5.8" height="5.6" fill="#1e4a8a"/><rect x="1228" y="73.2" width="3.8" height="3.6" fill="#4a7ab8"/>
<rect x="1233.8" y="72.2" width="2" height="5.6" fill="#9aa0aa"/>
<path d="M1227.8,80.4 H1235 M1227.8,84.4 H1235" stroke="#2a323c" stroke-width="1"/>
<path d="M1229.3,79 L1230.5,80.4 L1229.3,81.8 L1228.1,80.4 Z M1232.3,83 L1233.5,84.4 L1232.3,85.8 L1231.1,84.4 Z" fill="#fff" stroke="#2a323c" stroke-width="0.7"/>
</svg><div class="t" style="left:1209.0px;top:96.1px;font-size:12px;color:#242424;transform:scaleX(0.946);transform-origin:0 0;">Types</div>
<div class="a" style="left:8px;top:153px;width:1251px;height:27px;background:#d8dbe4;"></div>
<div class="t" style="left:12.0px;top:159.4px;font-size:12px;color:#111;transform:scaleX(1.020);transform-origin:0 0;">Modify Form</div>
<div class="a" style="left:100px;top:155px;width:1px;height:21px;background:#a8a8b0;box-shadow:1px 0 0 #fff"></div>
<div class="t" style="left:114.0px;top:159.4px;font-size:12px;color:#111;transform:scaleX(1.018);transform-origin:0 0;">Host:</div>
<div class="a" style="left:146px;top:156px;width:111px;height:18px;background:linear-gradient(180deg,#f2f2f2,#e2e2e2);border:1px solid #c8c8cc"></div>
<div class="t" style="left:148.0px;top:161.2px;font-size:12px;color:#111;transform:scaleX(0.943);transform-origin:0 0;">Level : Level 1</div>
<svg style="left:244px;top:162px" width="9" height="6"><path d="M0.5,0.5 H8.5 L4.5,5.5 Z" fill="#111"/></svg>
<div class="a" style="left:264px;top:155px;width:78px;height:19px;background:linear-gradient(180deg,#fdfdfd,#ececec);border:1px solid #8a8a8a"></div>
<div class="t" style="left:275.5px;top:159.0px;font-size:12px;color:#111;transform:scaleX(0.965);transform-origin:0 0;">Show Host</div>
<div class="a" style="left:8px;top:180px;width:150px;height:792px;background:#dfe6f0;"></div>
<div class="a" style="left:8px;top:180px;width:1px;height:792px;background:#4a4a4a;"></div>
<div class="a" style="left:9px;top:180px;width:148px;height:20px;background:linear-gradient(180deg,#b3c6d9,#d9e4ef);"></div>
<div class="t" style="left:11.5px;top:184.7px;font-size:12px;color:#3a4656;transform:scaleX(0.979);transform-origin:0 0;">Family1 - Project brow...</div>
<svg style="left:140px;top:183px" width="13" height="13" viewBox="0 0 13 13"><rect x="0.5" y="0.5" width="12" height="12" rx="1.5" fill="#dde7f1" stroke="#7a88a8"/><path d="M3.5,3.5 L9.5,9.5 M9.5,3.5 L3.5,9.5" stroke="#333" stroke-width="2.6"/><path d="M3.5,3.5 L9.5,9.5 M9.5,3.5 L3.5,9.5" stroke="#fff" stroke-width="1.2"/></svg>
<div class="a" style="left:157px;top:180px;width:1px;height:792px;background:#555;"></div>
<div class="a" style="left:158px;top:180px;width:7px;height:792px;background:linear-gradient(90deg,#f4f7fb,#e4eaf2);"></div>
<div class="a" style="left:11px;top:200px;width:143px;height:770px;background:#fff;border-left:2px solid #666;border-top:1px solid #666"></div>
<div class="a" style="left:52px;top:201px;width:59px;height:18px;background:#e4e4e4;"></div>
<svg style="left:0;top:0" width="160" height="600" viewBox="0 0 160 600"><g stroke="#8a8a8a" stroke-width="1" stroke-dasharray="1 1" fill="none"><path d="M21.5,216 V423"/><path d="M41.5,219 V225"/><path d="M41.5,234 V318"/><path d="M61.5,237 V248"/><path d="M61.5,273 V302"/><path d="M61.5,327 V392"/><path d="M41.5,433 V570"/><path d="M61.5,453 V536"/><path d="M81.5,471 V482"/><path d="M81.5,507 V518"/><path d="M81.5,543 V554"/><path d="M26,211.5 H33"/><path d="M46,229.5 H56"/><path d="M62,247.5 H76"/><path d="M46,265.5 H56"/><path d="M62,283.5 H76"/><path d="M62,301.5 H76"/><path d="M46,319.5 H56"/><path d="M62,337.5 H76"/><path d="M62,355.5 H76"/><path d="M62,373.5 H76"/><path d="M62,391.5 H76"/><path d="M22,409.5 H33"/><path d="M26,427.5 H33"/><path d="M46,445.5 H56"/><path d="M66,463.5 H76"/><path d="M82,481.5 H96"/><path d="M66,499.5 H76"/><path d="M82,517.5 H96"/><path d="M66,535.5 H76"/><path d="M82,553.5 H96"/><path d="M46,571.5 H56"/></g><rect x="17.5" y="207.5" width="9" height="9" rx="1" fill="#f2f2f2" stroke="#9a9a9a" stroke-width="1"/><path d="M19.5,212.0 H24.5" stroke="#2a3a9a" stroke-width="1.2"/><rect x="37.5" y="225.5" width="9" height="9" rx="1" fill="#f2f2f2" stroke="#9a9a9a" stroke-width="1"/><path d="M39.5,230.0 H44.5" stroke="#2a3a9a" stroke-width="1.2"/><rect x="37.5" y="261.5" width="9" height="9" rx="1" fill="#f2f2f2" stroke="#9a9a9a" stroke-width="1"/><path d="M39.5,266.0 H44.5" stroke="#2a3a9a" stroke-width="1.2"/><rect x="37.5" y="315.5" width="9" height="9" rx="1" fill="#f2f2f2" stroke="#9a9a9a" stroke-width="1"/><path d="M39.5,320.0 H44.5" stroke="#2a3a9a" stroke-width="1.2"/><rect x="17.5" y="423.5" width="9" height="9" rx="1" fill="#f2f2f2" stroke="#9a9a9a" stroke-width="1"/><path d="M19.5,428.0 H24.5" stroke="#2a3a9a" stroke-width="1.2"/><rect x="37.5" y="441.5" width="9" height="9" rx="1" fill="#f2f2f2" stroke="#9a9a9a" stroke-width="1"/><path d="M39.5,446.0 H44.5" stroke="#2a3a9a" stroke-width="1.2"/><rect x="57.5" y="459.5" width="9" height="9" rx="1" fill="#f2f2f2" stroke="#9a9a9a" stroke-width="1"/><path d="M59.5,464.0 H64.5" stroke="#2a3a9a" stroke-width="1.2"/><rect x="57.5" y="495.5" width="9" height="9" rx="1" fill="#f2f2f2" stroke="#9a9a9a" stroke-width="1"/><path d="M59.5,500.0 H64.5" stroke="#2a3a9a" stroke-width="1.2"/><rect x="57.5" y="531.5" width="9" height="9" rx="1" fill="#f2f2f2" stroke="#9a9a9a" stroke-width="1"/><path d="M59.5,536.0 H64.5" stroke="#2a3a9a" stroke-width="1.2"/><rect x="37.5" y="567.5" width="9" height="9" rx="1" fill="#f2f2f2" stroke="#9a9a9a" stroke-width="1"/><path d="M39.5,572.0 H44.5" stroke="#2a3a9a" stroke-width="1.2"/><path d="M42.0,569.5 V574.5" stroke="#2a3a9a" stroke-width="1.2"/><g fill="none" stroke="#222" stroke-width="1.3">
<path d="M34.5,206.5 V203.5 H37.5 M44.5,203.5 H47.5 V206.5 M47.5,213.5 V216.5 H44.5 M37.5,216.5 H34.5 V213.5"/>
<path d="M37.5,207 L39.5,205.5 H44.5 V212 L42.5,214 H37.5 Z" fill="#e8eaf0" stroke-width="1.1"/>
</g>
<path d="M33.5,401.5 H44.5 L48.5,405.5 V413.5 H33.5 Z" fill="#f8f8f8" stroke="#222" stroke-width="1.2"/>
<path d="M35.5,412 V405 H41.5 V412 M35.5,409 H38 V412 M46,406 V412" fill="none" stroke="#7a8898" stroke-width="1"/>
<path d="M34.5,419.5 H40.5 V425.5 H34.5 Z" fill="#e4e6ec" stroke="#222" stroke-width="1.2"/>
<path d="M42.5,419.5 H48.5 V432.5 H34.5 V427.5 H42.5 Z" fill="#eceef2" stroke="#222" stroke-width="1.2"/>
</svg>
<div class="a" style="left:13px;top:201px;width:140px;height:400px;overflow:hidden"><div class="a" style="left:-13px;top:-201px;width:300px;height:700px"><div class="t" style="left:55.0px;top:204.2px;font-size:12px;color:#111;">Views (all)</div>
<div class="t" style="left:59.7px;top:222.2px;font-size:12px;color:#111;">Floor Plans</div>
<div class="t" style="left:79.7px;top:240.2px;font-size:12px;color:#111;">Level 1</div>
<div class="t" style="left:59.7px;top:258.2px;font-size:12px;color:#111;">3D Views</div>
<div class="t" style="left:79.7px;top:276.2px;font-size:12px;color:#111;">3D View 1</div>
<div class="t" style="left:79.7px;top:294.2px;font-size:12px;color:#111;font-weight:bold;">{3D}</div>
<div class="t" style="left:59.7px;top:312.2px;font-size:12px;color:#111;">Elevations (Elevations)</div>
<div class="t" style="left:79.7px;top:330.2px;font-size:12px;color:#111;">East</div>
<div class="t" style="left:79.7px;top:348.2px;font-size:12px;color:#111;">North</div>
<div class="t" style="left:79.7px;top:366.2px;font-size:12px;color:#111;">South</div>
<div class="t" style="left:79.7px;top:384.2px;font-size:12px;color:#111;">West</div>
<div class="t" style="left:55.0px;top:402.2px;font-size:12px;color:#111;">Sheets (all)</div>
<div class="t" style="left:55.0px;top:420.2px;font-size:12px;color:#111;">Families</div>
<div class="t" style="left:59.7px;top:438.2px;font-size:12px;color:#111;">Annotation Symbols</div>
<div class="t" style="left:79.7px;top:456.2px;font-size:12px;color:#111;">Level Head - Tag</div>
<div class="t" style="left:99.7px;top:474.2px;font-size:12px;color:#111;">6 mm</div>
<div class="t" style="left:79.7px;top:492.2px;font-size:12px;color:#111;">Section Head - Filled</div>
<div class="t" style="left:99.7px;top:510.2px;font-size:12px;color:#111;">Section Head</div>
<div class="t" style="left:79.7px;top:528.2px;font-size:12px;color:#111;">Section Tail - Filled</div>
<div class="t" style="left:99.7px;top:546.2px;font-size:12px;color:#111;">2 mm x 9 mm</div>
<div class="t" style="left:59.7px;top:564.2px;font-size:12px;color:#111;">Pattern</div>
</div></div>
<div class="a" style="left:13px;top:953px;width:141px;height:16px;background:#ececec;"></div>
<div class="a" style="left:31px;top:953px;width:75px;height:15px;background:linear-gradient(180deg,#f4f4f4 0,#e8e8e8 50%,#d4d4d4 51%,#cfcfcf);border:1px solid #9a9a9a;border-radius:2px"></div>
<svg style="left:13px;top:953px" width="141" height="16" viewBox="0 0 141 16"><path d="M9,8 L13,4.5 V11.5 Z M134,8 L130,4.5 V11.5 Z" fill="#222"/><path d="M51.5,5 V11 M54.5,5 V11 M57.5,5 V11" stroke="#444" stroke-width="1"/></svg>
<div class="a" style="left:165px;top:179px;width:1094px;height:793px;background:#f0f0f0;border-left:1px solid #6a6a6a;border-top:1px solid #6a6a6a"></div>
<div class="a" style="left:164px;top:180px;width:1px;height:792px;background:#9a9a9a;"></div>
<div class="a" style="left:166px;top:180px;width:1074px;height:772px;background:linear-gradient(180deg,#f2f2f2 0,#a5a5a5 772px);"></div>
<svg style="left:0;top:0" width="1268" height="1002" viewBox="0 0 1268 1002">
<defs>
<clipPath id="vp"><rect x="166" y="180" width="1074" height="772"/></clipPath>
<filter id="sh" x="-30%" y="-30%" width="160%" height="160%"><feGaussianBlur in="SourceAlpha" stdDeviation="2.2"/><feOffset dx="2" dy="2" result="b"/><feComponentTransfer><feFuncA type="linear" slope="0.8"/></feComponentTransfer><feMerge><feMergeNode/><feMergeNode in="SourceGraphic"/></feMerge></filter>
<filter id="bl"><feGaussianBlur stdDeviation="3"/></filter>
<radialGradient id="cubesh" cx="0.5" cy="0.5" r="0.5"><stop offset="0" stop-color="#bdbdbd" stop-opacity=".8"/><stop offset="1" stop-color="#d0d0d0" stop-opacity="0"/></radialGradient>
</defs>
<g clip-path="url(#vp)">
<line x1="166" y1="434" x2="957.6" y2="302.7" stroke="#6a6a6a" stroke-width="1" stroke-dasharray="32.4 16.5 1.5 17" stroke-dashoffset="38"/>
<line x1="957.6" y1="302.7" x2="1245" y2="795" stroke="#6a6a6a" stroke-width="1" stroke-dasharray="21.5 10.7 1.5 10.7"/>
<polyline points="166,797 1150.3,633.7 1150.3,565" fill="none" stroke="#7a3a8a" stroke-width="1" stroke-dasharray="16 17" stroke-dashoffset="-1"/>
<line x1="597.8" y1="853.8" x2="660" y2="960" stroke="#6a2a7a" stroke-width="1" stroke-dasharray="10 9.5"/>
<g stroke="#3d73ff" stroke-width="3.5" stroke-linejoin="miter">
<polygon points="289,456 474,547 474,867 289,776" fill="#799ffe"/>
<polygon points="474,547 716.5,506 716,828 474,867" fill="#6984d9"/>
<polygon points="716.5,506 771.5,375.5 771.5,697 716,828" fill="#232f4c"/>
<polygon points="289,456 344.5,323 586,284 771.5,375.5 716.5,506 474,547" fill="#6f92eb"/>
</g>
<line x1="317.5" y1="649.5" x2="382.6" y2="761" stroke="#555" stroke-width="1"/>
<line x1="310" y1="650.7" x2="340" y2="645.7" stroke="#666" stroke-width="1"/>
<line x1="375" y1="762" x2="383" y2="761" stroke="#666" stroke-width="1"/>
<rect x="314.5" y="646.5" width="6" height="6" fill="#0a36c8"/>
<rect x="379.6" y="758" width="6" height="6" fill="#0a36c8"/>
<text transform="translate(340,683) rotate(51) skewX(-10)" font-family="Liberation Sans" font-size="11" fill="#1a38b0">16.4545 m</text>
<path d="M338.5,704 V713 M338.5,708 H351" stroke="#1a3aaa" stroke-width="1.2" fill="none"/>
<line x1="776" y1="373" x2="964" y2="342" stroke="#111" stroke-width="1.2"/>
<line x1="963.8" y1="342" x2="963.8" y2="665.3" stroke="#777" stroke-width="1.2"/>
<path d="M959,339 L968,346 M959,662 L968,669" stroke="#000" stroke-width="2.2"/>
<line x1="796.8" y1="387" x2="796.8" y2="709" stroke="#666" stroke-width="1"/>
<path d="M791,386 L803,390 M791,709 L802,712" stroke="#666" stroke-width="1"/>
<text transform="translate(957.2,547) rotate(-90)" font-family="Liberation Sans" font-size="10.5" fill="#000">Height = 28.56 m</text>
<clipPath id="rb"><rect x="775" y="503" width="39.5" height="79.5"/></clipPath>
<g clip-path="url(#rb)"><rect x="773" y="501" width="43.5" height="83.5" fill="none" stroke="#000" stroke-opacity=".45" stroke-width="8" filter="url(#bl)"/></g>
<rect x="773" y="501" width="43.5" height="83.5" fill="none" stroke="#ff0000" stroke-width="4.2" filter="url(#sh)"/>
<text transform="translate(790,568) rotate(-90) scale(0.74,1) skewX(-8)" font-family="Liberation Sans" font-size="14" fill="#1a38b8">28.5601 m</text>
<path d="M793.8,544.4 V553.5 M806.4,544.4 V553.5 M793.8,547.7 H806.4" stroke="#3a5acc" stroke-width="1.2" fill="none"/>
<g filter="url(#sh)">
<line x1="893" y1="594" x2="930" y2="539" stroke="#ff0000" stroke-width="8.5" stroke-linecap="round"/>
<polygon points="941,523.5 922.5,532 940,542.5" fill="#ff0000" stroke="#ff0000" stroke-width="1.5" stroke-linejoin="round"/>
</g>
<!-- viewcube -->
<ellipse cx="1150" cy="318" rx="58" ry="34" fill="url(#cubesh)" transform="rotate(-3 1150 318)"/>
<ellipse cx="1150.4" cy="316.6" rx="48" ry="25.5" fill="none" stroke="#ececec" stroke-opacity=".7" stroke-width="7" transform="rotate(-2 1150 316)"/><ellipse cx="1150.4" cy="316.6" rx="48" ry="25.5" fill="none" stroke="#a4a4a4" stroke-width="2" stroke-dasharray="2 0.6" transform="rotate(-2 1150 316)"/>
<path d="M1124,305 L1137,330 L1186,321 L1186,285 Z" fill="#b0b0b0" opacity=".6" filter="url(#bl)"/>
<polygon points="1120.6,260.1 1133.6,282.8 1134.9,325 1121.9,298.4" fill="#e2e2e2" stroke="#9a9a9a" stroke-width="1" stroke-dasharray="3 2"/>
<polygon points="1133.6,282.8 1182.2,275.7 1180.9,316.6 1134.9,325" fill="#ececec" stroke="#9a9a9a" stroke-width="1" stroke-dasharray="3 2"/>
<polygon points="1120.6,260.1 1165.4,253.6 1182.2,275.7 1133.6,282.8" fill="#f0f0f0" stroke="#9a9a9a" stroke-width="1" stroke-dasharray="3 2"/>
<text transform="translate(1142.7,307) rotate(-8)" font-family="Liberation Sans" font-weight="bold" font-size="11" fill="#8a8e94">RIGHT</text>
<text transform="translate(1150.5,266.5) rotate(76)" text-anchor="middle" dominant-baseline="central" font-family="Liberation Sans" font-weight="bold" font-size="8.5" fill="#9a9a9a">TOP</text>
<text transform="translate(1091.4,321.7) rotate(-68)" text-anchor="middle" dominant-baseline="central" font-family="Liberation Sans" font-weight="bold" font-size="15" fill="#a2a2a2">S</text>
<text transform="translate(1201.7,301.6) rotate(-62)" text-anchor="middle" dominant-baseline="central" font-family="Liberation Sans" font-weight="bold" font-size="15" fill="#a2a2a2">N</text>
<text transform="translate(1170.6,349.6) rotate(-22)" text-anchor="middle" dominant-baseline="central" font-family="Liberation Sans" font-weight="bold" font-size="15" fill="#a2a2a2">E</text>
</g>
</svg>
<svg style="left:1186px;top:181px" width="54" height="16" viewBox="0 0 54 16">
<rect x="3.5" y="8.5" width="11" height="3" fill="#fff" stroke="#333" stroke-width="1"/>
<rect x="23.5" y="3.5" width="8" height="9" fill="#f4f4f4" stroke="#333"/><path d="M23.5,3.5 L25.5,1.5 H33.5 V10.5 L31.5,12.5" fill="none" stroke="#333"/><rect x="26" y="6.5" width="3" height="3.5" fill="none" stroke="#333"/>
<path d="M40.5,4 L48.5,12 M48.5,4 L40.5,12" stroke="#333" stroke-width="3.2"/><path d="M40.5,4 L48.5,12 M48.5,4 L40.5,12" stroke="#f4f4f4" stroke-width="1.4"/>
</svg>
<div class="a" style="left:1211px;top:370px;width:29px;height:100px;background:linear-gradient(90deg,#dedede,#d4d4d4);border:1px solid #b4b4b4"></div>
<svg style="left:1211px;top:370px" width="29" height="100" viewBox="0 0 29 100">
<path d="M19.5,2.5 L25,8 M25,2.5 L19.5,8" stroke="#888" stroke-width="1.3"/>
<circle cx="13.3" cy="25" r="10.5" fill="#f4f4f4" stroke="#7a7a7a" stroke-width="1.3"/><circle cx="13.3" cy="25" r="9" fill="none" stroke="#d8d8d8" stroke-width="1.2"/>
<path d="M9,25 L14,22 V17.5 L18.5,15.5 L21,17.5 V27 L13.5,32 L8,29 Z" fill="#a8c8ec" stroke="#5a80b0" stroke-width="0.8"/>
<path d="M9,25 L13.5,28 V32 M13.5,28 L21,23 M14,22 L18.5,19.5 V24.5 M18.5,19.5 L14,17.5" fill="none" stroke="#5a80b0" stroke-width="0.7"/>
<path d="M9,25 L14,22 L18.5,24.5 L13.5,28 Z" fill="#cfe0f4"/><path d="M14,17.5 L18.5,15.5 L21,17.5 L18.5,19.5 Z" fill="#cfe0f4"/>
<path d="M10.5,42 H16 L13.2,45 Z M10.5,79 H16 L13.2,82 Z" fill="#888"/>
<path d="M3,53 H24" stroke="#c4c4c4" stroke-width="1.2"/>
<circle cx="12.5" cy="64" r="6" fill="#eee" stroke="#777" stroke-width="1.2"/><rect x="9.5" y="61" width="6" height="6" fill="#8ac07a" stroke="#3a8a2a" stroke-width="0.8"/><path d="M17,68.5 L21.5,73" stroke="#777" stroke-width="2.4"/>
<path d="M18,90 H25 M18,92.5 H25 L21.5,96 Z" stroke="#888" fill="#888" stroke-width="0.8"/>
</svg>
<div class="a" style="left:1240px;top:180px;width:19px;height:772px;background:#efefef;border-left:1px solid #fff"></div>
<svg style="left:1240px;top:180px" width="19" height="772" viewBox="0 0 19 772"><path d="M6,11 L9.5,7 L13,11 Z M6,760 L9.5,764 L13,760 Z" fill="#222"/></svg>
<div class="a" style="left:1241px;top:559px;width:15px;height:15px;background:linear-gradient(90deg,#f6f6f6 0,#ececec 50%,#d8d8d8 51%,#cfcfcf);border:1px solid #8a8a8a;border-radius:2px"></div>
<div class="a" style="left:166px;top:952px;width:1074px;height:18px;background:#efefef;border-top:1px solid #fff"></div>
<div class="t" style="left:190.3px;top:954.8px;font-size:12px;color:#111;transform:scaleX(0.899);transform-origin:0 0;">1 : 200</div>
<svg style="left:244px;top:953px" width="170" height="16" viewBox="0 0 170 16">
<rect x="2.5" y="1.5" width="14" height="12" fill="#fff" stroke="#333" stroke-width="1"/>
<g fill="#777"><rect x="4" y="3" width="2" height="2"/><rect x="8" y="3" width="2" height="2"/><rect x="12" y="3" width="2" height="2"/><rect x="6" y="5" width="2" height="2"/><rect x="10" y="5" width="2" height="2"/><rect x="4" y="7" width="2" height="2"/><rect x="8" y="7" width="2" height="2"/><rect x="12" y="7" width="2" height="2"/><rect x="6" y="9" width="2" height="2"/><rect x="10" y="9" width="2" height="2"/><rect x="4" y="11" width="2" height="2"/><rect x="8" y="11" width="2" height="2"/><rect x="12" y="11" width="2" height="2"/></g>
<path d="M23.5,5.5 L27,1.5 H37.5 V10 L34,13.5 H23.5 Z" fill="#a8d0f0" stroke="#2a72c8" stroke-width="1.1"/><path d="M23.5,5.5 H34 V13.5 M34,5.5 L37.5,1.5" fill="none" stroke="#2a72c8" stroke-width="1.1"/>
<circle cx="49" cy="6" r="4" fill="#dceaf6" stroke="#2a72c8" stroke-width="1.1"/><path d="M45,13 H52" stroke="#333"/><path d="M51,8 L57,14 M57,8 L51,14" stroke="#e01a1a" stroke-width="2"/>
<path d="M64,7 H68 M66,3 V13 H76 M68,4 H75 V9" fill="none" stroke="#2a62b8" stroke-width="1.4"/><path d="M69,8 L75,14 M75,8 L69,14" stroke="#e01a1a" stroke-width="2"/>
<path d="M84,7 H88 M86,3 V13 H92 M88,4 H94" fill="none" stroke="#2a62b8" stroke-width="1.4"/><path d="M90,8 H92 M90,10 H92" stroke="#e01a1a"/><circle cx="96.5" cy="8" r="3" fill="#dceaf6" stroke="#2a72c8"/><path d="M96.5,11 V14" stroke="#2a72c8"/>
<path d="M104,6 C106,3 108,3 110,6 C112,9 116,9 118,6 L120,4 M104,6 C105,10 109,11 112,8 M112,8 C114,12 118,11 119,7" fill="none" stroke="#222" stroke-width="1.1"/>
<circle cx="133.5" cy="7.5" r="2.5" fill="#f4f4f4" stroke="#aaa"/><path d="M132.5,10 V13 H134.5 V10" fill="none" stroke="#aaa"/>
</svg>
<div class="a" style="left:390px;top:952px;width:17px;height:17px;background:#e2e2e2;"></div>
<svg style="left:390px;top:952px" width="850" height="17" viewBox="0 0 850 17"><path d="M6,8.5 L9.5,5 V12 Z" fill="#222"/></svg>
<svg style="left:1226px;top:956px" width="8" height="10"><path d="M1.5,1 L6,5 L1.5,9 Z" fill="#222"/></svg>
<div class="a" style="left:808px;top:953px;width:15px;height:15px;background:linear-gradient(180deg,#f6f6f6 0,#ececec 50%,#d8d8d8 51%,#cfcfcf);border:1px solid #8a8a8a;border-radius:2px"></div>
<div class="a" style="left:8px;top:971px;width:1251px;height:1px;background:#6a6a6a;"></div>
<div class="a" style="left:8px;top:972px;width:1251px;height:23px;background:linear-gradient(180deg,#f2f2f2,#d0d0d0);"></div>
<div class="a" style="left:8px;top:995px;width:1251px;height:1px;background:#4a5a4a;"></div>
<div class="t" style="left:10.6px;top:978.2px;font-size:12px;color:#000;transform:scaleX(0.954);transform-origin:0 0;">Click to select, TAB for alternates, CTRL adds, SHIFT unselects.</div>
<div class="a" style="left:819px;top:973px;width:1px;height:21px;background:#bcbcbc;box-shadow:1px 0 0 #f4f4f4"></div>
<div class="a" style="left:1239px;top:973px;width:1px;height:21px;background:#bcbcbc;box-shadow:1px 0 0 #f4f4f4"></div>
<svg style="left:1044px;top:977px" width="130" height="16" viewBox="0 0 130 16">
<rect x="0.5" y="0.5" width="13" height="13" fill="#fff" stroke="#555"/><path d="M3,7 L6,10.5 L11,2.5" fill="none" stroke="#1a9a1a" stroke-width="2"/>
<path d="M103.5,1.5 H119.5 L113,8 V13 L110,15 V8 Z" fill="#f4f4f4" stroke="#333" stroke-width="1.1"/>
</svg>
<div class="t" style="left:1062.0px;top:979.2px;font-size:12px;color:#111;transform:scaleX(0.943);transform-origin:0 0;">Press &amp; Drag</div>
<div class="t" style="left:1163.0px;top:981.2px;font-size:12px;color:#111;">:1</div>
<svg style="left:1244px;top:980px" width="12" height="12"><g fill="#fff"><rect x="8" y="0" width="2" height="2"/><rect x="4" y="4" width="2" height="2"/><rect x="8" y="4" width="2" height="2"/><rect x="0" y="8" width="2" height="2"/><rect x="4" y="8" width="2" height="2"/><rect x="8" y="8" width="2" height="2"/></g></svg>
<svg style="left:1243px;top:958px" width="12" height="12"><g fill="#9a9a9a"><rect x="8" y="0" width="1.5" height="1.5"/><rect x="4" y="4" width="1.5" height="1.5"/><rect x="8" y="4" width="1.5" height="1.5"/><rect x="0" y="8" width="1.5" height="1.5"/><rect x="4" y="8" width="1.5" height="1.5"/><rect x="8" y="8" width="1.5" height="1.5"/></g></svg>
</body></html>
